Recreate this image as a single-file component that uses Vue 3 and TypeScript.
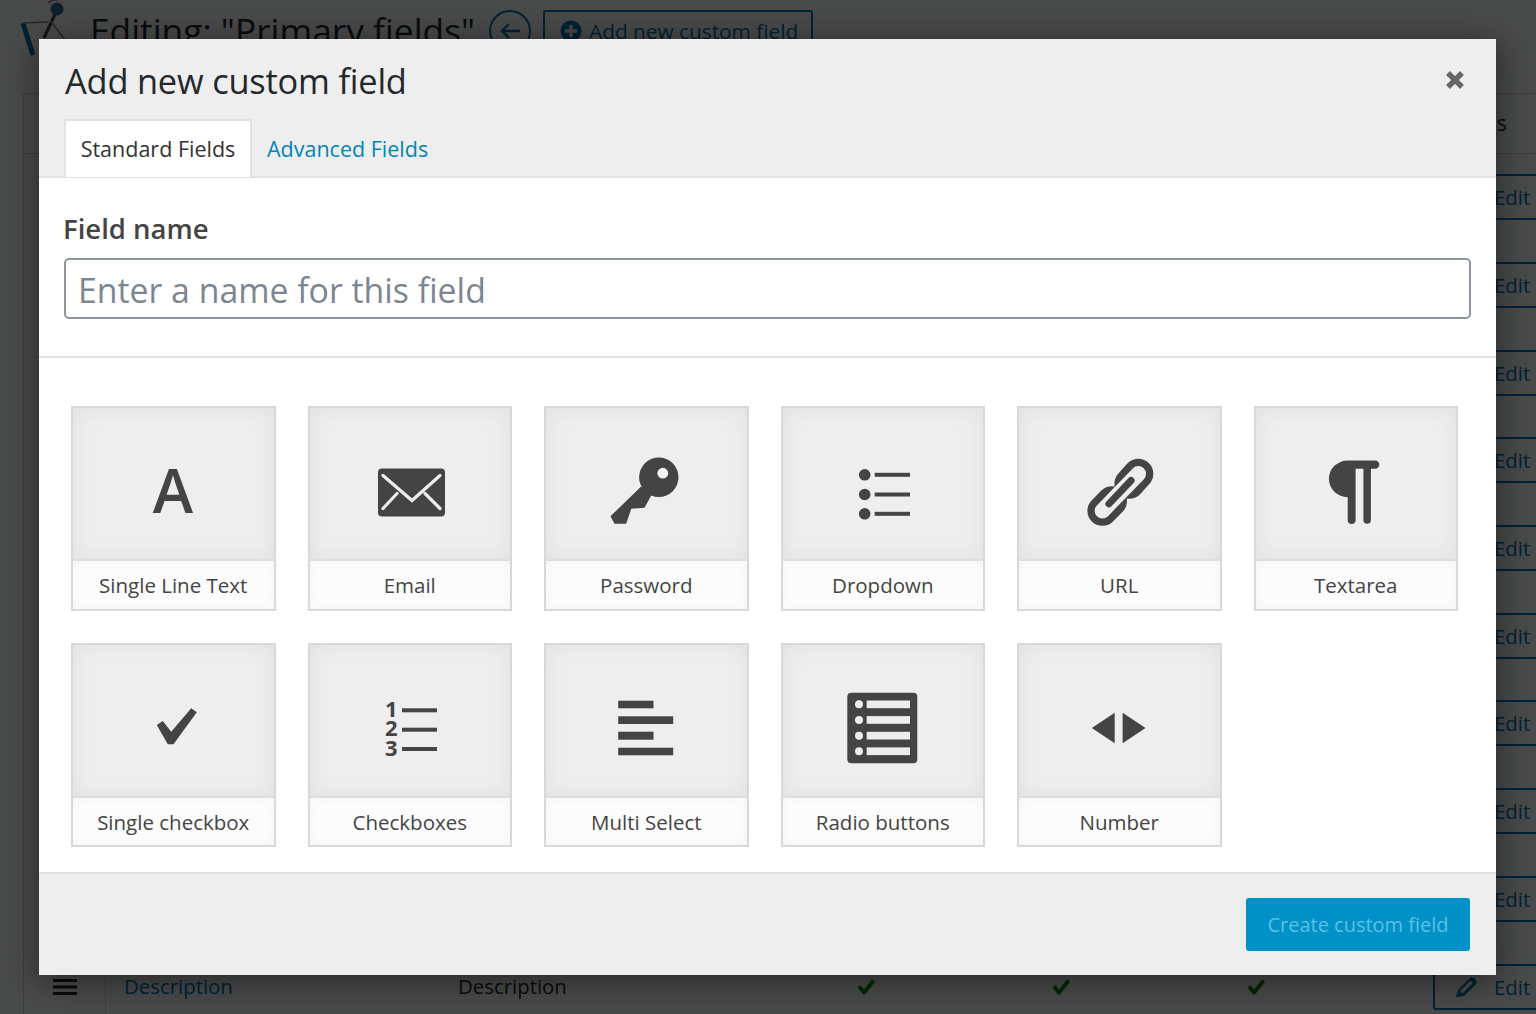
<script setup lang="ts">
interface FieldType { label: string; icon: string }

const fieldTypes: FieldType[] = [
  { label: 'Single Line Text', icon: 'text' },
  { label: 'Email', icon: 'email' },
  { label: 'Password', icon: 'password' },
  { label: 'Dropdown', icon: 'dropdown' },
  { label: 'URL', icon: 'url' },
  { label: 'Textarea', icon: 'textarea' },
  { label: 'Single checkbox', icon: 'check' },
  { label: 'Checkboxes', icon: 'checkboxes' },
  { label: 'Multi Select', icon: 'multi' },
  { label: 'Radio buttons', icon: 'radio' },
  { label: 'Number', icon: 'number' },
]

const rows = Array.from({ length: 10 }, (_, i) => ({
  id: i,
  name: i === 9 ? 'Description' : '',
  slug: i === 9 ? 'Description' : '',
  checks: i === 9,
}))
</script>

<template>
  <div class="page">
    <header class="top">
      <svg class="logo" width="50" height="56" viewBox="0 0 50 56" fill="none">
        <path d="M3 23 L13 55" stroke="#0073aa" stroke-width="5" />
        <path d="M3 23 L28 22" stroke="#888" stroke-width="1.6" />
        <path d="M37 10 L24 38" stroke="#444" stroke-width="3" />
        <path d="M30 20 L45 40" stroke="#888" stroke-width="1.6" />
        <circle cx="37" cy="9" r="6.5" fill="#2a6f95" />
        <path d="M28 3 Q32 -1 38 0" stroke="#888" stroke-width="1.4" />
      </svg>
      <h2 class="page-title">Editing: "Primary fields"</h2>
      <span class="back">
        <svg width="22" height="18" viewBox="0 0 22 18" fill="none" stroke="#0073aa" stroke-width="2.4">
          <path d="M21 9 H3 M10 2 L3 9 L10 16" />
        </svg>
      </span>
      <span class="add-btn">
        <svg width="22" height="22" viewBox="0 0 22 22">
          <circle cx="11" cy="11" r="10.5" fill="#0073aa" />
          <path d="M11 5 V17 M5 11 H17" stroke="#f1f1f1" stroke-width="3.4" />
        </svg>
        Add new custom field
      </span>
    </header>

    <section class="table">
      <div class="thead"><span class="th-actions">Actions</span></div>
      <div v-for="row in rows" :key="row.id" class="tr">
        <div class="cell-handle">
          <svg v-if="row.checks" width="24" height="16" viewBox="0 0 24 16" fill="#222">
            <rect y="0" width="24" height="3" />
            <rect y="6.5" width="24" height="3" />
            <rect y="13" width="24" height="3" />
          </svg>
        </div>
        <div class="cell-name">{{ row.name }}</div>
        <div class="cell-slug">{{ row.slug }}</div>
        <div v-for="c in 3" :key="c" class="cell-check">
          <svg v-if="row.checks" width="18" height="16" viewBox="0 0 18 16">
            <path d="M0.5 8.5 L3.5 6 L7 10.5 L15 0.5 L18 3 L8 15.5 L6 15.5 Z" fill="#0a8a0a" />
          </svg>
        </div>
        <div class="cell-edit">
          <span class="edit-btn">
            <svg class="pencil" width="24" height="22" viewBox="0 0 24 22" fill="#0073aa">
              <path d="M1 21 L3 14 L15 2 Q17 0.5 19 2 L21 4 Q22.5 6 21 8 L9 20 Z M5 15 L7.5 17.5 L18 7 L15.5 4.5 Z" fill-rule="evenodd" />
            </svg>
            Edit
          </span>
        </div>
      </div>
    </section>

    <div class="backdrop"></div>

    <div class="modal">
      <div class="modal-head">
        <h1 class="modal-title">Add new custom field</h1>
        <svg class="close" width="20" height="20" viewBox="0 0 20 20">
          <path d="M3 3 L17 17 M17 3 L3 17" stroke="#666" stroke-width="5.4" />
        </svg>
        <nav class="tabs">
          <span class="tab active">Standard Fields</span>
          <span class="tab link">Advanced Fields</span>
        </nav>
      </div>

      <div class="name-block">
        <label class="name-label">Field name</label>
        <input class="name-input" type="text" placeholder="Enter a name for this field" />
      </div>

      <div class="grid">
        <div v-for="f in fieldTypes" :key="f.label" class="card">
          <div class="card-icon">
            <svg width="100" height="100" viewBox="0 0 100 100" fill="#444">
              <text v-if="f.icon === 'text'" x="50" y="78.5" text-anchor="middle" class="glyph-a">A</text>
              <template v-else-if="f.icon === 'email'">
                <rect x="18" y="34.5" width="67" height="48" rx="4" />
                <path d="M23 41.5 L52 66.5 L80 41.5 M23 74.5 L37 59.5 M80 74.5 L65 59.5" fill="none" stroke="#ededed" stroke-width="3.2" stroke-linecap="round" />
              </template>
              <template v-else-if="f.icon === 'password'">
                <circle cx="62.8" cy="43.2" r="19.7" />
                <path d="M45.2 52.5 L14.5 82.2 L18.5 89.8 L30.2 89.8 L35.2 74.8 L48.5 73.8 L55.2 61.5 Z" />
                <circle cx="66.8" cy="39.2" r="5.4" fill="#f4f4f4" />
              </template>
              <template v-else-if="f.icon === 'dropdown'">
                <circle cx="31.7" cy="40.8" r="5.8" />
                <circle cx="31.7" cy="60.5" r="5.8" />
                <circle cx="31.7" cy="79.8" r="5.8" />
                <rect x="41.7" y="38.8" width="35.3" height="4" />
                <rect x="41.7" y="58.5" width="35.3" height="4" />
                <rect x="41.7" y="77.8" width="35.3" height="4" />
              </template>
              <template v-else-if="f.icon === 'url'">
                <g fill="none" stroke-linecap="round">
                  <path d="M69.3 39.8 L60.4 49.8 M33.4 76.8 L43 67.2" stroke="#444" stroke-width="30" />
                  <path d="M33.4 76.8 L69.3 39.8" stroke="#ededed" stroke-width="15.5" />
                  <path d="M39.9 69.8 L62.1 46.5" stroke="#444" stroke-width="7" />
                </g>
              </template>
              <path v-else-if="f.icon === 'textarea'" d="M41.7 26.5 H69.2 A4.15 4.15 0 0 1 69.2 34.8 H64.9 V86 A3.75 3.75 0 0 1 57.4 86 V34.8 H49.6 V86 A3.95 3.95 0 0 1 41.7 86 V63.2 A18.8 18.35 0 0 1 41.7 26.5 Z" />
              <path v-else-if="f.icon === 'check'" d="M33.8 55 L39.8 51 L48.2 61.7 L68.2 38.3 L73.8 42.3 L50.5 74.3 L44.8 74.3 Z" />
              <template v-else-if="f.icon === 'checkboxes'">
                <text x="31.3" y="46.7" text-anchor="middle" class="glyph-n">1</text>
                <text x="31.3" y="66" text-anchor="middle" class="glyph-n">2</text>
                <text x="31.3" y="85.7" text-anchor="middle" class="glyph-n">3</text>
                <rect x="42" y="38.3" width="35" height="4" />
                <rect x="42" y="57.7" width="35" height="4" />
                <rect x="42" y="77" width="35" height="4" />
              </template>
              <template v-else-if="f.icon === 'multi'">
                <rect x="22.2" y="30.7" width="35.3" height="7.6" />
                <rect x="22.2" y="46.3" width="55" height="7.7" />
                <rect x="22.2" y="61.7" width="35.3" height="8" />
                <rect x="22.2" y="77.7" width="55" height="7.6" />
              </template>
              <template v-else-if="f.icon === 'radio'">
                <rect x="14.3" y="22.7" width="70" height="70.6" rx="4" />
                <g fill="#ededed">
                  <circle cx="26" cy="34.3" r="4" />
                  <circle cx="26" cy="50" r="4" />
                  <circle cx="26" cy="65.7" r="4" />
                  <circle cx="26" cy="81.3" r="4" />
                  <rect x="33.7" y="30.5" width="43.3" height="7.7" />
                  <rect x="33.7" y="46.1" width="43.3" height="7.7" />
                  <rect x="33.7" y="61.8" width="43.3" height="7.7" />
                  <rect x="33.7" y="77.4" width="43.3" height="7.7" />
                </g>
              </template>
              <template v-else-if="f.icon === 'number'">
                <path d="M45.7 42.7 L22.8 58 L45.7 73.3 Z" />
                <path d="M53.6 42.7 L76.5 58 L53.6 73.3 Z" />
              </template>
            </svg>
          </div>
          <div class="card-label">{{ f.label }}</div>
        </div>
      </div>

      <div class="modal-foot">
        <button class="create" type="button">Create custom field</button>
      </div>
    </div>
  </div>
</template>

<style>
html, body { margin: 0; background: #f1f1f1; }
</style>

<style scoped>
.page {
  position: relative;
  width: 1536px;
  height: 1014px;
  overflow: hidden;
  background: #f6f7f7;
  font-family: "Open Sans", "Noto Sans", sans-serif;
  color: #23282d;
}
.top {
  display: flex;
  align-items: flex-start;
  height: 93px;
  padding-left: 20px;
}
.logo { flex: none; margin-right: 20px; }
.page-title {
  margin: 7px 14px 0 0;
  font-size: 35.3px;
  line-height: 46px;
  font-weight: 400;
  white-space: nowrap;
}
.back {
  flex: none;
  box-sizing: border-box;
  width: 42px;
  height: 42px;
  margin: 10px 12px 0 0;
  border: 2px solid #0073aa;
  border-radius: 50%;
  display: flex;
  align-items: center;
  justify-content: center;
}
.add-btn {
  flex: none;
  box-sizing: border-box;
  width: 270px;
  height: 46px;
  margin-top: 10px;
  border: 2px solid #0073aa;
  border-radius: 3px;
  display: flex;
  align-items: center;
  gap: 7px;
  padding: 0 0 4px 15px;
  color: #0073aa;
  font-size: 20.8px;
  white-space: nowrap;
}
.table { width: 1600px; margin-left: 23px; border-left: 1px solid #ccd0d4; }
.thead {
  height: 58.5px;
  border-top: 1px solid #ccd0d4;
  border-bottom: 1px solid #ccd0d4;
  display: flex;
  align-items: center;
  padding-left: 1411px;
  font-size: 21px;
}
.th-actions { white-space: nowrap; }
.tr {
  display: grid;
  grid-template-columns: 82px 334px 328px 195px 195px 195px 1fr;
  height: 87.7px;
  align-items: center;
  font-size: 20.4px;
}
.tr > div { height: 100%; display: flex; align-items: center; box-sizing: border-box; }
.cell-handle { justify-content: center; border-right: 1px solid #ccd0d4; }
.cell-name { color: #0073aa; padding-left: 18px; }
.cell-slug { padding-left: 18px; }
.cell-slug, .cell-name { padding-bottom: 1px; }
.cell-check { justify-content: center; }
.cell-edit { padding-left: 80px; }
.edit-btn {
  box-sizing: border-box;
  width: 150px;
  height: 46px;
  border: 2px solid #0073aa;
  border-radius: 3px;
  display: flex;
  align-items: center;
  padding-left: 20px;
  gap: 15px;
  color: #0073aa;
}
.pencil { flex: none; }
.backdrop {
  position: absolute;
  inset: 0;
  background: rgba(0, 0, 0, 0.7);
}
.modal {
  position: absolute;
  left: 39px;
  top: 39px;
  width: 1457px;
  height: 936px;
  display: flex;
  flex-direction: column;
  background: #fff;
  box-shadow: 0 5px 32px rgba(0, 0, 0, 0.5);
}
.modal-head {
  position: relative;
  box-sizing: border-box;
  height: 139px;
  flex: none;
  background: #eee;
  border-bottom: 2px solid #e2e2e2;
  padding: 17px 25px 0;
}
.modal-title {
  margin: 0 0 0 1px;
  font-size: 34.4px;
  line-height: 50px;
  font-weight: 400;
  color: #23282d;
  letter-spacing: -0.2px;
}
.close { position: absolute; right: 31px; top: 31px; }
.tabs { display: flex; margin-top: 13px; height: 58px; }
.tab {
  display: flex;
  align-items: center;
  font-size: 21.5px;
  white-space: nowrap;
  box-sizing: border-box;
  height: 58px;
  padding: 0 15px 2px;
}
.tab.active {
  background: #fff;
  border: 2px solid #e2e2e2;
  border-bottom: 0;
  width: 188px;
  color: #333;
  justify-content: center;
  padding: 0 0 2px;
}
.tab.link { color: #0085ba; border-top: 2px solid transparent; }
.name-block {
  flex: none;
  box-sizing: border-box;
  height: 180px;
  padding: 31px 25px 0;
  border-bottom: 2px solid #e2e2e2;
}
.name-label {
  display: block;
  font-size: 27.5px;
  line-height: 40px;
  font-weight: 600;
  color: #444;
  margin-left: -1px;
}
.name-input {
  display: block;
  box-sizing: border-box;
  width: 1407px;
  height: 61px;
  margin-top: 9px;
  padding: 2px 12px 0 12px;
  border: 2px solid #8d96a0;
  border-radius: 5px;
  font-family: inherit;
  font-size: 33.8px;
  color: #32373c;
  background: #fff;
  outline: none;
}
.name-input::placeholder { color: #7b8690; opacity: 1; }
.grid {
  flex: none;
  display: grid;
  grid-template-columns: repeat(6, 1fr);
  grid-auto-rows: 204.5px;
  gap: 32px;
  padding: 48px 38px 0 32px;
  height: 514px;
  box-sizing: border-box;
}
.card {
  box-sizing: border-box;
  border: 2px solid #d8d8d8;
  display: flex;
  flex-direction: column;
  background: #fcfcfc;
}
.card-icon {
  flex: none;
  height: 151px;
  background: #eeeeee;
  border-bottom: 2px solid #dedede;
  box-shadow: inset 0 0 24px rgba(0, 0, 0, 0.06);
  display: flex;
  align-items: center;
  justify-content: center;
}
.card-label {
  flex: 1;
  display: flex;
  align-items: center;
  justify-content: center;
  padding-top: 1px;
  font-size: 20.5px;
  font-weight: 500;
  color: #444;
  white-space: nowrap;
  box-shadow: inset 0 0 14px rgba(0, 0, 0, 0.03);
}
.glyph-a { font-family: "Open Sans", sans-serif; font-size: 61px; font-weight: 600; }
.glyph-n { font-family: "Open Sans", sans-serif; font-size: 22px; font-weight: 700; }
.modal-foot {
  flex: 1;
  box-sizing: border-box;
  background: #eee;
  border-top: 2px solid #e2e2e2;
  display: flex;
  justify-content: flex-end;
  align-items: flex-start;
  padding: 24px 26px 0 0;
}
.create {
  width: 224px;
  height: 53px;
  border: 0;
  border-radius: 3px;
  background: #0091c8;
  color: #5dc0e2;
  font-family: inherit;
  font-size: 20px;
  padding: 0;
}
</style>
